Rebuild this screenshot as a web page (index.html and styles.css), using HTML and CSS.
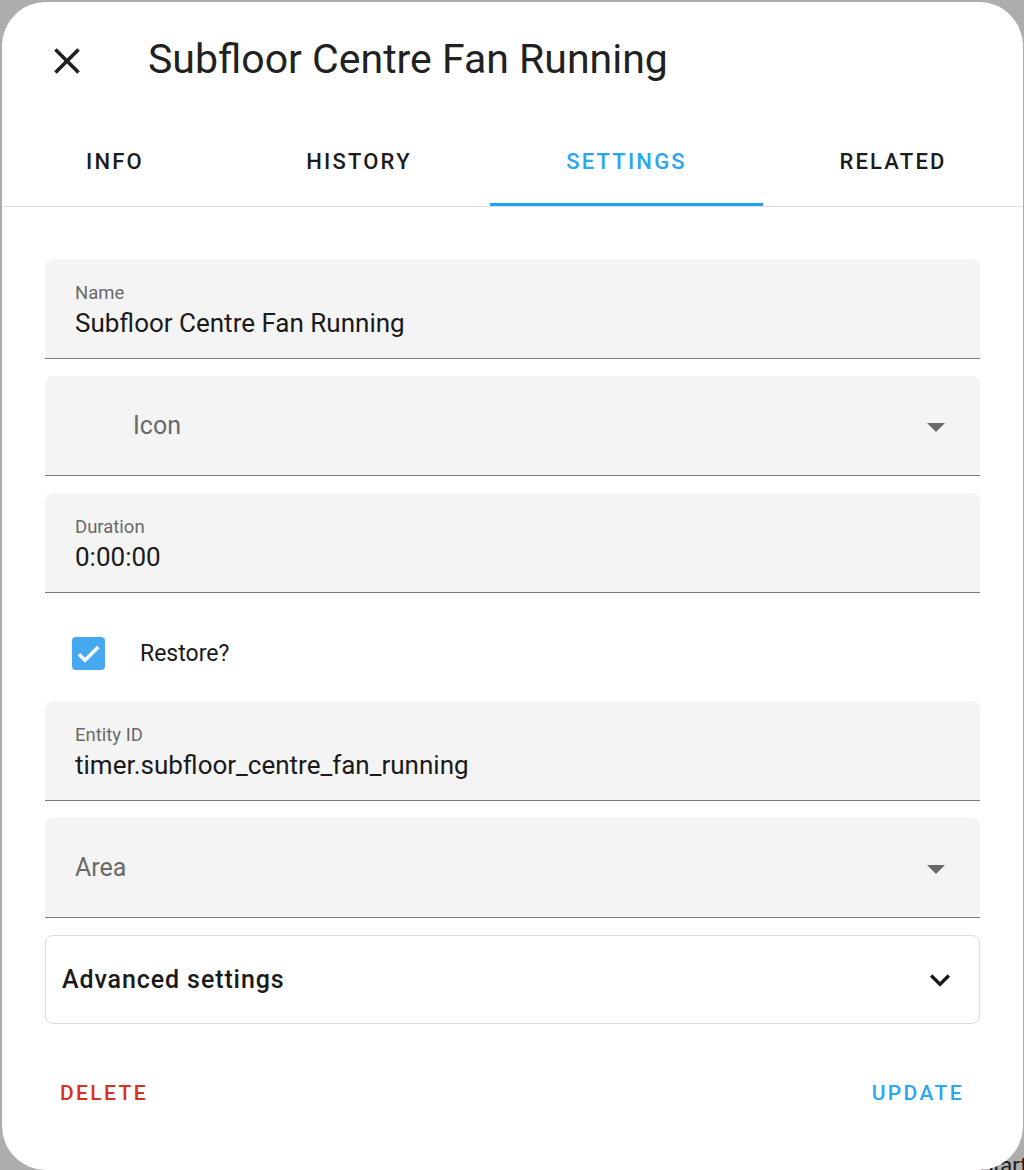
FILE: index.html
```html
<!DOCTYPE html>
<html lang="en">
<head>
<meta charset="utf-8">
<title>Subfloor Centre Fan Running</title>
<link rel="stylesheet" href="styles.css">
</head>
<body>
<span class="bg-text">Start</span>
<div class="dialog">
  <header class="header">
    <button class="close" aria-label="Close">
      <svg viewBox="0 0 24 24" width="44" height="44"><path d="M19,6.41L17.59,5L12,10.59L6.41,5L5,6.41L10.59,12L5,17.59L6.41,19L12,13.41L17.59,19L19,17.59L13.41,12L19,6.41Z"/></svg>
    </button>
    <h1 class="title">Subfloor Centre Fan Running</h1>
  </header>
  <nav class="tabs">
    <div class="tab">INFO</div>
    <div class="tab">HISTORY</div>
    <div class="tab active">SETTINGS</div>
    <div class="tab">RELATED</div>
  </nav>
  <main class="content">
    <div class="field">
      <div class="label">Name</div>
      <div class="value">Subfloor Centre Fan Running</div>
    </div>
    <div class="field select icon-field">
      <div class="placeholder">Icon</div>
      <span class="arrow"></span>
    </div>
    <div class="field">
      <div class="label">Duration</div>
      <div class="value">0:00:00</div>
    </div>
    <div class="check-row">
      <span class="checkbox">
        <svg viewBox="0 0 24 24" width="31" height="31"><path d="M4.6 12.6l4.7 4.6L19.6 6.9" fill="none" stroke="#fff" stroke-width="2.8"/></svg>
      </span>
      <span class="check-label">Restore?</span>
    </div>
    <div class="field">
      <div class="label">Entity ID</div>
      <div class="value">timer.subfloor_centre_fan_running</div>
    </div>
    <div class="field select">
      <div class="placeholder">Area</div>
      <span class="arrow"></span>
    </div>
    <div class="expander">
      <span class="expander-title">Advanced settings</span>
      <svg class="chevron" viewBox="0 0 24 24" width="40" height="40"><path d="M7.41,8.58L12,13.17L16.59,8.58L18,10L12,16L6,10L7.41,8.58Z"/></svg>
    </div>
  </main>
  <footer class="actions">
    <button class="btn delete">DELETE</button>
    <button class="btn update">UPDATE</button>
  </footer>
</div>
</body>
</html>
```

FILE: styles.css
```css
* { box-sizing: border-box; }
html, body { margin: 0; padding: 0; }
body {
  background: #adadad;
  font-family: Roboto, "Noto Sans", sans-serif;
  color: #212121;
  width: 1024px;
  height: 1170px;
  overflow: hidden;
  position: relative;
}
.bg-text {
  position: absolute;
  left: 980px;
  top: 1153px;
  font-size: 22px;
  color: #1a1a1a;
}
.dialog {
  position: relative;
  margin: 2px 1px 0 2px;
  width: 1021px;
  height: 1168px;
  background: #fff;
  border-radius: 44px;
  display: flex;
  flex-direction: column;
}
.header {
  height: 118px;
  display: flex;
  align-items: center;
}
.close {
  background: none;
  border: none;
  padding: 0;
  margin-left: 43px;
  width: 44px;
  height: 44px;
  display: flex;
}
.close svg { fill: #212121; }
.title {
  margin: 0 0 0 59px;
  font-size: 41px;
  font-weight: 400;
  color: #212121;
  letter-spacing: 0;
  position: relative;
  top: -2px;
}
.tabs {
  display: grid;
  grid-template-columns: 226px 262px 273px 1fr;
  height: 87px;
  border-bottom: 1px solid #dedede;
}
.tab {
  position: relative;
  display: flex;
  align-items: center;
  justify-content: center;
  font-size: 22px;
  font-weight: 500;
  letter-spacing: 2.2px;
  color: #1c1c1c;
  padding-bottom: 4px;
}
.tab.active { color: #2ba6f0; }
.tab.active::after {
  content: "";
  position: absolute;
  left: 0;
  right: 0;
  bottom: 0;
  height: 3px;
  background: #1ea3f2;
}
.content {
  padding: 52px 43px 0;
  display: flex;
  flex-direction: column;
  gap: 17px;
}
.field {
  height: 100px;
  background: #f4f4f4;
  border-radius: 8px 8px 0 0;
  border-bottom: 1px solid #7a7a7a;
  padding: 23px 30px 0;
  position: relative;
}
.label {
  font-size: 18.5px;
  line-height: 22px;
  color: #6a6a6a;
}
.value {
  margin-top: 4px;
  font-size: 26px;
  line-height: 30px;
  color: #1a1a1a;
}
.select {
  padding-top: 0;
  display: flex;
  align-items: center;
}
.placeholder {
  font-size: 25px;
  color: #6a6a6a;
}
.icon-field { padding-left: 88px; }
.arrow {
  position: absolute;
  right: 35px;
  top: 47px;
  width: 0;
  height: 0;
  border-left: 9px solid transparent;
  border-right: 9px solid transparent;
  border-top: 9px solid #6a6a6a;
}
.check-row {
  height: 74px;
  padding-top: 12px;
  padding-left: 27px;
  display: flex;
  align-items: center;
}
.checkbox {
  width: 33px;
  height: 33px;
  border-radius: 4px;
  background: #45a8f0;
  display: flex;
  align-items: center;
  justify-content: center;
}
.check-label {
  margin-left: 35px;
  font-size: 23px;
  color: #1a1a1a;
}
.expander {
  height: 89px;
  border: 1px solid #dcdcdc;
  border-radius: 8px;
  display: flex;
  align-items: center;
  justify-content: space-between;
  padding: 0 19px 0 16px;
}
.expander-title {
  font-size: 25px;
  font-weight: 500;
  letter-spacing: 0.9px;
  color: #1a1a1a;
}
.chevron { fill: #1a1a1a; }
.actions {
  display: flex;
  justify-content: space-between;
  padding: 52px 59px 0 58px;
}
.btn {
  background: none;
  border: none;
  padding: 0;
  font-family: Roboto, "Noto Sans", sans-serif;
  font-size: 21px;
  font-weight: 500;
  letter-spacing: 2.4px;
  line-height: 34px;
}
.delete { color: #d8321e; }
.update { color: #2ba6f0; }
```
